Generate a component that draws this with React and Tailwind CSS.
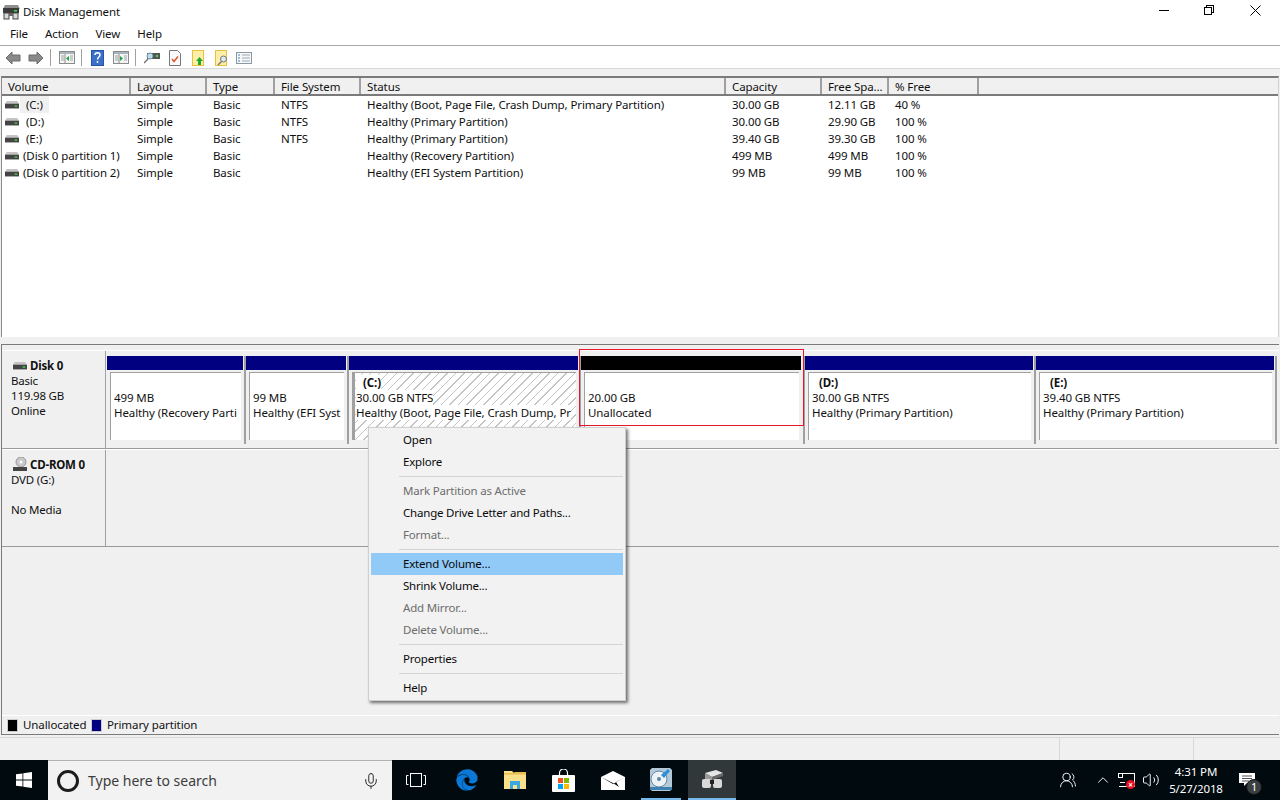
import { Mic, ChevronUp, UsersRound, Volume2 } from 'lucide-react'
import { FaEdge } from 'react-icons/fa'

const COLUMNS = [
  { label: 'Volume', w: 'w-[129px]' },
  { label: 'Layout', w: 'w-[76px]' },
  { label: 'Type', w: 'w-[68px]' },
  { label: 'File System', w: 'w-[86px]' },
  { label: 'Status', w: 'w-[365px]' },
  { label: 'Capacity', w: 'w-[96px]' },
  { label: 'Free Spa...', w: 'w-[67px]' },
  { label: '% Free', w: 'w-[90px]' },
]

const ROWS = [
  ['(C:)', 'Simple', 'Basic', 'NTFS', 'Healthy (Boot, Page File, Crash Dump, Primary Partition)', '30.00 GB', '12.11 GB', '40 %'],
  ['(D:)', 'Simple', 'Basic', 'NTFS', 'Healthy (Primary Partition)', '30.00 GB', '29.90 GB', '100 %'],
  ['(E:)', 'Simple', 'Basic', 'NTFS', 'Healthy (Primary Partition)', '39.40 GB', '39.30 GB', '100 %'],
  ['(Disk 0 partition 1)', 'Simple', 'Basic', '', 'Healthy (Recovery Partition)', '499 MB', '499 MB', '100 %'],
  ['(Disk 0 partition 2)', 'Simple', 'Basic', '', 'Healthy (EFI System Partition)', '99 MB', '99 MB', '100 %'],
]

const PARTITIONS = [
  { w: 'w-[139px]', lines: ['499 MB', 'Healthy (Recovery Parti'] },
  { w: 'w-[103px]', lines: ['99 MB', 'Healthy (EFI Syst'] },
  { w: 'w-[232px]', name: '(C:)', hatched: true, lines: ['30.00 GB NTFS', 'Healthy (Boot, Page File, Crash Dump, Pr'] },
  { w: 'w-[224px]', black: true, lines: ['20.00 GB', 'Unallocated'] },
  { w: 'w-[231px]', name: '(D:)', lines: ['30.00 GB NTFS', 'Healthy (Primary Partition)'] },
  { w: 'w-[241px]', name: '(E:)', lines: ['39.40 GB NTFS', 'Healthy (Primary Partition)'] },
]

const MENU = [
  { label: 'Open' },
  { label: 'Explore' },
  { sep: true },
  { label: 'Mark Partition as Active', off: true },
  { label: 'Change Drive Letter and Paths...' },
  { label: 'Format...', off: true },
  { sep: true },
  { label: 'Extend Volume...', hot: true },
  { label: 'Shrink Volume...' },
  { label: 'Add Mirror...', off: true },
  { label: 'Delete Volume...', off: true },
  { sep: true },
  { label: 'Properties' },
  { sep: true },
  { label: 'Help' },
]

function DriveIcon({ className = '' }) {
  return (
    <svg viewBox="0 0 16 9" className={`h-2 shrink-0 ${className}`} preserveAspectRatio="none">
      <path d="M2 0h12l2 3H0z" fill="#c4c4c4" />
      <rect x="0" y="3" width="16" height="5" fill="#444" />
      <rect x="11" y="5" width="3" height="1.5" fill="#3ddc4a" />
      <rect x="0" y="8" width="16" height="1" fill="#a4a4a4" />
    </svg>
  )
}

function AppIcon() {
  return (
    <svg viewBox="0 0 18 16" className="w-[18px] h-4">
      <path d="M3 1h13l2 4H1z" fill="#8e8e8e" />
      <rect x="1" y="4" width="16" height="5" fill="#3a3a3a" />
      <rect x="12" y="6" width="3" height="1.5" fill="#3ddc4a" />
      <rect x="2" y="9" width="5" height="6" fill="#d8d8d8" stroke="#444" />
      <rect x="11" y="9" width="5" height="6" fill="#d8d8d8" stroke="#444" />
      <rect x="7" y="9" width="4" height="3" fill="#666" />
    </svg>
  )
}

function Arrow({ flip }) {
  return (
    <svg viewBox="0 0 16 14" className={`w-4 h-[14px] ${flip ? '-scale-x-100' : ''}`}>
      <path d="M1 7l6-6v3h8v6H7v3z" fill="#8a8a8a" stroke="#6b6b6b" />
    </svg>
  )
}

function PaneIcon({ arrow }) {
  return (
    <svg viewBox="0 0 16 13" className="w-4 h-[13px]">
      <rect x=".5" y=".5" width="15" height="12" fill="#f4f4f4" stroke="#8a8a8a" />
      <rect x="1" y="1" width="14" height="2" fill="#a8b4bc" />
      <line x1="6" y1="3" x2="6" y2="12" stroke="#8a8a8a" />
      <path d="M2 5h3M2 7h3M2 9h3M11 5h3M11 7h3M11 9h3" stroke="#9aa4aa" />
      <path d={arrow === 'left' ? 'M10 5v5L7 7.500z' : 'M7 5v5l3-2.500z'} fill="#19a33c" />
    </svg>
  )
}

function ToolbarIcons() {
  return (
    <div className="flex items-center h-[22px] pt-px pl-[5px]">
      <Arrow />
      <span className="w-[7px]" />
      <Arrow flip />
      <span className="w-px h-[17px] bg-[#a0a0a0] ml-[6px] mr-[8px]" />
      <PaneIcon arrow="left" />
      <span className="w-px h-[17px] bg-[#a0a0a0] ml-[6px] mr-[9px]" />
      <svg viewBox="0 0 13 16" className="w-[13px] h-4">
        <rect width="13" height="16" fill="#2456a8" />
        <rect x="1" y="1" width="11" height="14" fill="#3a70c8" />
        <path d="M4 5c0-3 5-3 5 0 0 2-2.500 2-2.500 4.500M6.500 11v2" stroke="#fff" strokeWidth="1.500" fill="none" />
      </svg>
      <span className="w-[9px]" />
      <PaneIcon arrow="right" />
      <span className="w-px h-[17px] bg-[#a0a0a0] ml-[6px] mr-[8px]" />
      <svg viewBox="0 0 16 13" className="w-4 h-[13px]">
        <rect x="3" y="2" width="13" height="6" fill="#555" />
        <rect x="12" y="4" width="2" height="2" fill="#3ddc4a" />
        <circle cx="6" cy="5" r="3" fill="#bcdcec" stroke="#6f8fa0" />
        <line x1="4" y1="8" x2="0" y2="12" stroke="#777" strokeWidth="1.500" />
      </svg>
      <span className="w-[9px]" />
      <svg viewBox="0 0 12 16" className="w-3 h-4">
        <path d="M.5.5h8l3 3v12H.5z" fill="#fafafa" stroke="#777" />
        <path d="M3 9l2 2.500 4-5" stroke="#e0562a" strokeWidth="1.500" fill="none" />
      </svg>
      <span className="w-[11px]" />
      <svg viewBox="0 0 12 16" className="w-3 h-4">
        <rect x=".5" y=".5" width="11" height="15" fill="#fdeea8" stroke="#e8c23c" />
        <path d="M7.500 7l3.500 4H9v4H6v-4H4z" fill="#1eaa2a" />
      </svg>
      <span className="w-[11px]" />
      <svg viewBox="0 0 13 16" className="w-[13px] h-4">
        <rect x=".5" y=".5" width="11" height="15" fill="#fdeea8" stroke="#e8c23c" />
        <circle cx="8.500" cy="9" r="3" fill="#dbe9f2" stroke="#777" />
        <line x1="6.500" y1="11.500" x2="3" y2="15" stroke="#777" strokeWidth="1.500" />
      </svg>
      <span className="w-[8px]" />
      <svg viewBox="0 0 16 12" className="w-4 h-3">
        <rect x=".5" y=".5" width="15" height="11" fill="#f6f8fa" stroke="#8a98a4" />
        <path d="M2 3h2M2 6h2M2 9h2" stroke="#4a80b0" />
        <path d="M6 3h8M6 6h8M6 9h8" stroke="#a0a8ae" />
      </svg>
    </div>
  )
}

function VolumeTable() {
  return (
    <div className="h-[261px] mx-[1px] bg-white border-t-2 border-[#7a7a7a] border-l border-l-[#8a8a8a] border-r border-r-[#d0d0d0] overflow-hidden">
      <div className="flex h-[18px] bg-[#f0f0f0] border-b-2 border-[#7a7a7a]">
        {COLUMNS.map(c => (
          <div key={c.label} className={`${c.w} shrink-0 pl-[6px] leading-[17px] border-r-2 border-[#a0a0a0] truncate`}>{c.label}</div>
        ))}
      </div>
      {ROWS.map((row, i) => (
        <div key={row[0]} className="flex h-[17px] leading-[17px] text-[#101010]">
          {row.map((cell, j) => (
            <div key={j} className={`${COLUMNS[j].w} shrink-0 pl-[6px] truncate`}>
              {j === 0 ? (
                <span className="flex items-center -ml-[3px]">
                  <DriveIcon className="w-[14px] mr-px" />
                  <span className={i === 0 ? 'bg-[#f0f0f0] px-[6px]' : i < 3 ? 'pl-[6px]' : 'pl-[3px]'}>{cell}</span>
                </span>
              ) : cell}
            </div>
          ))}
        </div>
      ))}
    </div>
  )
}

function Partition({ p }) {
  const fill = p.hatched ? 'bg-white w-fit' : ''
  return (
    <div className={`${p.w} shrink-0 h-[88px] border-r-2 border-[#a0a0a0] ${p.black ? 'pr-[2px]' : 'pr-px'}`}>
      <div className={`h-[14px] ${p.black ? 'bg-black' : 'bg-[#000080]'}`} />
      <div
        className={`h-[68px] mt-[2px] ml-[3px] mr-[2px] pt-[2px] border-t border-[#a0a0a0] whitespace-nowrap leading-[15px] ${
          p.hatched
            ? 'border-l-[3px] pl-px bg-[repeating-linear-gradient(135deg,#ffffff_0,#ffffff_5px,#c4c4c4_5px,#c4c4c4_6px)]'
            : 'border-l pl-[3px] bg-white'
        }`}
      >
        <div className={`h-[15px] font-bold pl-[7px] ${fill}`}>{p.name}</div>
        {p.lines.map(l => <div key={l} className={fill}>{l}</div>)}
      </div>
    </div>
  )
}

function DiskLabel({ icon, title, lines }) {
  return (
    <div className="w-[104px] shrink-0 pl-[9px] pt-[7px] leading-[15px] tracking-[-0.2px] border-r border-[#a0a0a0]">
      <div className="flex items-center font-bold h-[15px] gap-[3px] ml-[2px]">{icon}<span>{title}</span></div>
      {lines.map((l, i) => <div key={i} className="h-[15px]">{l}</div>)}
    </div>
  )
}

function ContextMenu() {
  return (
    <div className="absolute left-[368px] top-[427px] w-[258px] bg-[#f2f2f2] border border-[#cfcfcf] shadow-[2px_2px_3px_rgba(0,0,0,0.55)] px-[2px] pt-px pb-[1px] tracking-[-0.2px] text-[#0a0a0a] z-10">
      {MENU.map((m, i) => m.sep ? (
        <div key={i} className="h-[7px] ml-[28px] flex items-center"><div className="h-px w-full bg-[#d4d4d4]" /></div>
      ) : (
        <div key={i} className={`h-[22px] leading-[22px] pl-[32px] ${m.hot ? 'bg-[#91c9f7]' : ''} ${m.off ? 'text-[#6d6d6d]' : ''}`}>{m.label}</div>
      ))}
    </div>
  )
}

function WindowsLogo() {
  return (
    <svg viewBox="0 0 16 16" className="w-4 h-4">
      <path d="M0 2.300l6.500-.9v6.200H0zM7.300 1.300L16 0v7.600H7.300zM0 8.400h6.500v6.200L0 13.700zM7.300 8.400H16V16l-8.700-1.300z" fill="#fff" />
    </svg>
  )
}

function Taskbar() {
  return (
    <div className="h-10 bg-[#010a0e] flex items-center text-white shrink-0">
      <div className="w-12 h-10 flex items-center justify-center"><WindowsLogo /></div>
      <div className="w-[344px] h-10 bg-[#f2f2f2] border-t border-[#b0b0b0] flex items-center pl-[9px] text-[#3c3c3c]">
        <span className="w-[22px] h-[22px] rounded-full border-[3px] border-[#1c1c1c]" />
        <span className="ml-[9px] text-[14px] tracking-normal">Type here to search</span>
        <Mic size={18} strokeWidth={1.25} className="ml-auto mr-[12px] text-[#222]" />
      </div>
      <div className="w-[50px] flex justify-center pr-[2px]">
        <svg viewBox="0 0 20 14" className="w-5 h-[14px]" fill="none" stroke="#fff">
          <rect x="4.500" y=".5" width="11" height="13" />
          <path d="M2.500 2.500H.5v9h2M17.500 2.500h2v9h-2" />
        </svg>
      </div>
      <div className="w-[49px] flex justify-center">
        <FaEdge size={22} className="text-[#0a78d4]" />
      </div>
      <div className="w-[48px] flex justify-center">
        <svg viewBox="0 0 22 18" className="w-[22px] h-[18px]">
          <path d="M0 0h8l2 2h12v16H0z" fill="#fbe08c" />
          <path d="M0 2h9l2-1h11v2.500H0z" fill="#e8bd50" />
          <path d="M6 18v-8h10v8h-3v-4H9v4z" fill="#3ba7e0" />
        </svg>
      </div>
      <div className="w-[49px] flex justify-center">
        <svg viewBox="0 0 23 23" className="w-[23px] h-[23px]">
          <path d="M7.500 7V4a4 4 0 018 0v3" fill="none" stroke="#fff" strokeWidth="1.200" />
          <rect y="6" width="23" height="17" rx="1" fill="#fff" />
          <rect x="6" y="9" width="5" height="5" fill="#f25022" />
          <rect x="12" y="9" width="5" height="5" fill="#7fba00" />
          <rect x="6" y="15" width="5" height="5" fill="#00a4ef" />
          <rect x="12" y="15" width="5" height="5" fill="#ffb900" />
        </svg>
      </div>
      <div className="w-[49px] flex justify-center">
        <svg viewBox="0 0 24 19" className="w-6 h-[19px]">
          <path d="M0 6L12 0l12 6v13H0z" fill="#fff" />
          <path d="M0 6l12 7 12-7-9 5 3 5-6-4z" fill="#010a0e" />
        </svg>
      </div>
      <div className="w-[51px] h-10 pl-[4px] pr-[7px] flex">
        <div className="w-10 h-10 flex justify-center items-center border-b-2 border-[#76b9ed]">
          <svg viewBox="0 0 24 24" className="w-6 h-6">
            <path d="M3 1h18l2 2v19l-2 2H3l-2-2V3z" fill="#b4cad8" />
            <circle cx="10" cy="12" r="8" fill="#eef2f5" stroke="#5a87a8" />
            <circle cx="10" cy="12" r="2" fill="#5a87a8" />
            <path d="M12 8l7-6 2 2-6 7z" fill="#2d8fd8" />
            <rect x="1" y="20" width="22" height="3" fill="#3d7fae" />
          </svg>
        </div>
      </div>
      <div className="w-[48px] h-10 bg-[#31383a] flex justify-center items-center border-b-2 border-[#76b9ed]">
        <svg viewBox="0 0 22 18" className="w-[22px] h-[18px]">
          <path d="M4 3l11-3 7 3-11 4z" fill="#e6e6e6" />
          <path d="M4 3l7 4v3H4z" fill="#9a9a9a" />
          <path d="M11 7l11-4v3l-11 4z" fill="#6a6a6a" />
          <rect x="1" y="9" width="9" height="9" rx="2" fill="#d8d8d8" />
          <rect x="12" y="9" width="9" height="9" rx="2" fill="#d8d8d8" />
          <rect x="9" y="10" width="4" height="4" fill="#222" />
        </svg>
      </div>
      <div className="ml-auto flex items-center h-10">
        <UsersRound size={18} strokeWidth={1.25} className="mr-[17px]" />
        <ChevronUp size={18} strokeWidth={1.25} className="mr-[7px]" />
        <div className="relative w-4 h-[14px] mr-[7px] border border-white border-l-0">
          <span className="absolute -left-px -top-px w-[5px] h-[5px] border border-white bg-[#010a0e]" />
          <span className="absolute left-[1px] top-[8px] w-[5px] h-px bg-white" />
          <span className="absolute -right-[1px] -bottom-[3px] w-[9px] h-[9px] rounded-full bg-[#e81123] text-[8px] leading-[9px] text-center font-bold">×</span>
        </div>
        <Volume2 size={18} strokeWidth={1.25} className="mr-[5px]" />
        <div className="text-center leading-[17px] w-[62px]">
          <div>4:31 PM</div>
          <div>5/27/2018</div>
        </div>
        <div className="relative w-[53px] h-10 pl-[12px] pt-[13px]">
          <svg viewBox="0 0 16 14" className="w-4 h-[14px]">
            <path d="M0 0h16v10H8l-3 3v-3H0z" fill="#fff" />
            <path d="M3 3h10M3 5.500h10M3 8h7" stroke="#010a0e" strokeWidth=".7" />
          </svg>
          <span className="absolute left-[19px] top-[19px] w-4 h-4 rounded-full bg-[#3a3f41] border border-[#111] text-[11px] leading-[14px] text-center">1</span>
        </div>
      </div>
    </div>
  )
}

export default function App() {
  return (
    <div className="relative w-[1280px] h-[800px] overflow-hidden flex flex-col bg-[#f0f0f0] text-[11.5px] tracking-[-0.1px] text-[#111] font-['Noto_Sans',sans-serif]">
      {/* title + menu */}
      <div className="h-[23px] bg-white flex items-center pl-[2px] shrink-0">
        <AppIcon />
        <span className="ml-[3px] mt-px">Disk Management</span>
        <div className="ml-auto self-start mt-[5px] mr-[19px] flex items-start">
          <svg viewBox="0 0 10 11" className="w-[10px] h-[11px] mr-[35px]"><rect y="5" width="10" height="1" fill="#000" /></svg>
          <svg viewBox="0 0 10 10" className="w-[10px] h-[10px] mr-[36px]" fill="none" stroke="#000" shapeRendering="crispEdges">
            <rect x=".5" y="2.500" width="7" height="7" />
            <path d="M2.500 2.500v-2h7v7h-2" />
          </svg>
          <svg viewBox="0 0 11 11" className="w-[11px] h-[11px]" fill="none" stroke="#000">
            <path d="M.5.5l10 10M10.500.5l-10 10" />
          </svg>
        </div>
      </div>
      <div className="h-[23px] bg-white flex items-center pl-[10px] gap-[17px] shrink-0 border-b border-[#a8a8a8]">
        <span>File</span><span>Action</span><span>View</span><span>Help</span>
      </div>
      <div className="h-[23px] bg-white border-b border-[#d8d8d8] shrink-0"><ToolbarIcons /></div>

      <div className="pt-[7px] shrink-0"><VolumeTable /></div>

      {/* disks */}
      <div className="h-[7px] shrink-0" />
      <div className="h-[391px] mx-[1px] border-t border-l border-b border-[#7a7a7a] flex flex-col shrink-0">
        <div className="h-[6px] border-b border-white shrink-0" />
        <div className="flex h-[98px] border-b border-[#9a9a9a] shrink-0">
          <DiskLabel icon={<DriveIcon className="w-[14px]" />} title="Disk 0" lines={['Basic', '119.98 GB', 'Online']} />
          <div className="flex pt-[5px] pl-px">
            {PARTITIONS.map((p, i) => <Partition key={i} p={p} />)}
          </div>
        </div>
        <div className="flex h-[98px] border-t border-white border-b-[#9a9a9a] border-b shrink-0">
          <DiskLabel
            icon={
              <svg viewBox="0 0 14 15" className="w-[14px] h-[15px]">
                <circle cx="8" cy="5" r="5" fill="#c8c8c8" stroke="#999" />
                <circle cx="8" cy="5" r="1.500" fill="#fff" />
                <rect y="10" width="14" height="4" fill="#444" />
              </svg>
            }
            title="CD-ROM 0"
            lines={['DVD (G:)', '', 'No Media']}
          />
        </div>
        <div className="flex-1" />
        <div className="h-[19px] border-t border-white flex items-center pl-[5px] shrink-0">
          <span className="w-[11px] h-[13px] bg-black border border-[#ccc]" />
          <span className="ml-[5px] w-[63px]">Unallocated</span>
          <span className="ml-[5px] w-[11px] h-[13px] bg-[#000080] border border-[#ccc]" />
          <span className="ml-[5px]">Primary partition</span>
        </div>
      </div>

      {/* status bar */}
      <div className="flex-1 flex justify-end mt-[2px] border-t border-[#d8d8d8]">
        <div className="w-[134px] border-l border-[#d8d8d8]" />
        <div className="w-[87px] border-l border-[#d8d8d8]" />
      </div>
      <Taskbar />

      <ContextMenu />
      <div className="absolute left-[579px] top-[349px] w-[225px] h-[77px] border border-[#e8192c] pointer-events-none" />
    </div>
  )
}
